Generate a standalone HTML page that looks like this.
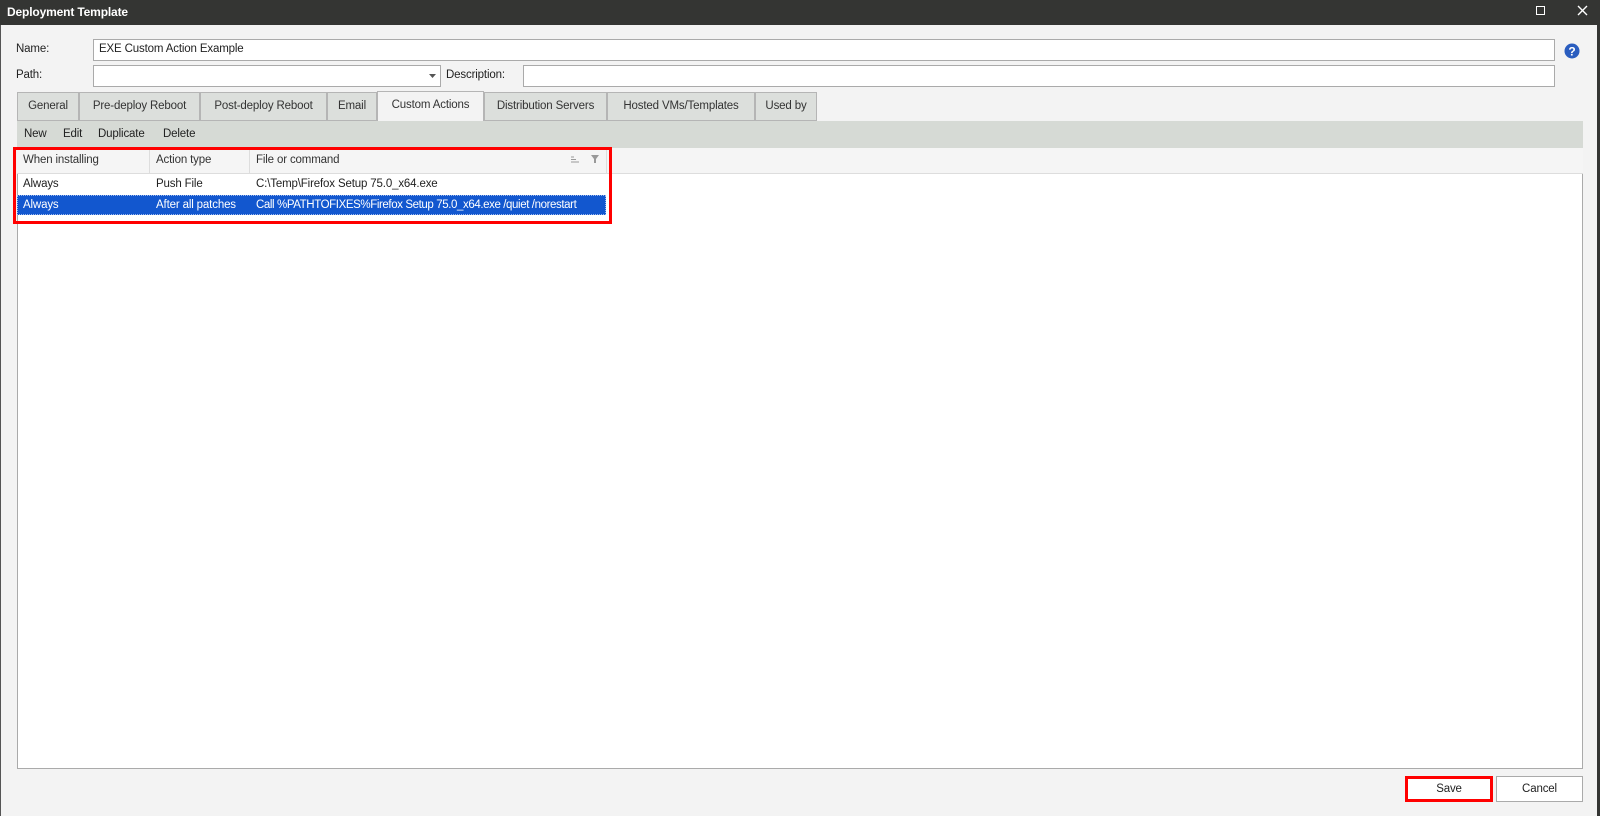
<!DOCTYPE html><html><head><style>
*{box-sizing:border-box;margin:0;padding:0}
body{width:1600px;height:816px;background:#f3f3f3;font-family:"Liberation Sans",sans-serif;font-size:11.5px;letter-spacing:-0.15px;color:#222;position:relative;overflow:hidden}
.a{position:absolute}
.inp{position:absolute;background:#fff;border:1px solid #aaa}
.tab{position:absolute;top:92px;height:29px;border:1px solid #b5b5b5;background:#dcdfdc;text-align:center;line-height:26px;color:#333}
.t{position:absolute;white-space:nowrap}
</style></head><body>
<div class="a" style="left:0;top:0;width:1600px;height:25px;background:#343533"></div>
<div class="t" style="left:7px;top:5px;color:#fff;font-weight:bold;font-size:12px">Deployment Template</div>
<div class="a" style="left:1536px;top:6px;width:9px;height:9px;border:1.5px solid #fff"></div>
<svg class="a" style="left:1577px;top:5px" width="11" height="11"><path d="M1 1L10 10M10 1L1 10" stroke="#fff" stroke-width="1.4"/></svg>
<div class="a" style="left:0;top:25px;width:1px;height:791px;background:#555"></div>
<div class="a" style="left:1597px;top:25px;width:3px;height:791px;background:#343533"></div>
<div class="t" style="left:16px;top:43px">Name:</div>
<div class="inp" style="left:93px;top:39px;width:1462px;height:22px"></div>
<div class="t" style="left:99px;top:43px">EXE Custom Action Example</div>
<svg class="a" style="left:1564px;top:43px" width="16" height="16"><circle cx="8" cy="8" r="7.5" fill="#2a5dbf"/><text x="8" y="12.5" font-size="12" font-weight="bold" fill="#fff" text-anchor="middle" font-family="Liberation Sans">?</text></svg>
<div class="t" style="left:16px;top:69px">Path:</div>
<div class="inp" style="left:93px;top:65px;width:348px;height:22px"></div>
<svg class="a" style="left:429px;top:74px" width="7" height="4"><path d="M0 0H7L3.5 4Z" fill="#555"/></svg>
<div class="t" style="left:446px;top:69px">Description:</div>
<div class="inp" style="left:523px;top:65px;width:1032px;height:22px"></div>
<div class="tab" style="left:17px;width:62px">General</div>
<div class="tab" style="left:79px;width:121px">Pre-deploy Reboot</div>
<div class="tab" style="left:200px;width:127px">Post-deploy Reboot</div>
<div class="tab" style="left:327px;width:50px">Email</div>
<div class="tab" style="left:377px;width:107px;background:#f3f3f3;border-bottom:none;top:91px;height:30px">Custom Actions</div>
<div class="tab" style="left:484px;width:123px">Distribution Servers</div>
<div class="tab" style="left:607px;width:148px">Hosted VMs/Templates</div>
<div class="tab" style="left:755px;width:62px">Used by</div>
<div class="a" style="left:17px;top:121px;width:1566px;height:27px;background:#d6dad5"></div>
<div class="t" style="left:24px;top:128px">New</div>
<div class="t" style="left:63px;top:128px">Edit</div>
<div class="t" style="left:98px;top:128px">Duplicate</div>
<div class="t" style="left:163px;top:128px">Delete</div>
<div class="a" style="left:17px;top:148px;width:1566px;height:621px;background:#fff;border:1px solid #aaa;border-top:none"></div>
<div class="a" style="left:17px;top:148px;width:1566px;height:26px;background:#f5f5f5;border-bottom:1px solid #ddd"></div>
<div class="a" style="left:149px;top:150px;width:1px;height:24px;background:#ddd"></div>
<div class="a" style="left:249px;top:150px;width:1px;height:24px;background:#ddd"></div>
<div class="a" style="left:606px;top:150px;width:1px;height:24px;background:#ddd"></div>
<div class="t" style="left:23px;top:154px;color:#333">When installing</div>
<div class="t" style="left:156px;top:154px;color:#333">Action type</div>
<div class="t" style="left:256px;top:154px;color:#333">File or command</div>
<svg class="a" style="left:571px;top:156px" width="8" height="7"><path d="M0 1H3M0 3.5H5M0 6H8" stroke="#999"/></svg>
<svg class="a" style="left:591px;top:155px" width="8" height="8"><path d="M0 0H8L5 4V8H3V4Z" fill="#999"/></svg>
<div class="t" style="left:23px;top:178px">Always</div>
<div class="t" style="left:156px;top:178px">Push File</div>
<div class="t" style="left:256px;top:178px">C:\Temp\Firefox Setup 75.0_x64.exe</div>
<div class="a" style="left:17px;top:195px;width:589px;height:20px;background:#1257cf;border:1px dotted #9bb8ee"></div>
<div class="t" style="left:23px;top:199px;color:#fff">Always</div>
<div class="t" style="left:156px;top:199px;color:#fff">After all patches</div>
<div class="t" style="left:256px;top:199px;color:#fff;letter-spacing:-0.4px">Call %PATHTOFIXES%Firefox Setup 75.0_x64.exe /quiet /norestart</div>
<div class="a" style="left:13px;top:147px;width:599px;height:77px;border:3px solid #f00"></div>
<div class="a" style="left:1405px;top:776px;width:88px;height:26px;background:#fff;border:3px solid #f00;text-align:center;line-height:20px">Save</div>
<div class="a" style="left:1496px;top:776px;width:87px;height:26px;background:#fff;border:1px solid #aaa;text-align:center;line-height:24px">Cancel</div>
</body></html>
